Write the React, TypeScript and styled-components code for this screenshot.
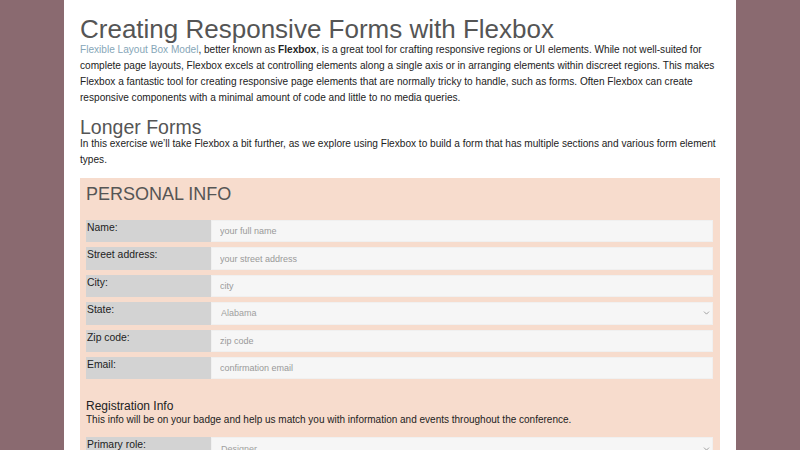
import React from 'react';
import styled, {createGlobalStyle} from 'styled-components';
import {ChevronDown} from 'lucide-react';

const GlobalStyle = createGlobalStyle`
  html, body {
    margin: 0;
    padding: 0;
    background: #8a6a70;
    font-family: "Liberation Sans", Arial, sans-serif;
    color: #222;
  }
`

const Page = styled.div`
  width: 640px;
  min-height: 100vh;
  margin: 0 auto;
  padding: 18px 16px 24px;
  background: #fff;
`

const Title = styled.h1`
  margin: 0 0 2px;
  font-size: 26px;
  font-weight: normal;
  line-height: 22px;
  color: #555;
`

const SubTitle = styled.h2`
  margin: 12px 0 0;
  font-size: 19.5px;
  font-weight: normal;
  line-height: 18px;
  color: #555;
`

const Paragraph = styled.p`
  margin: 0;
  font-size: 10.1px;
  line-height: 16px;
`

const Link = styled.a`
  color: #86a6b8;
  text-decoration: none;
`

const Form = styled.form`
  margin-top: 10px;
  padding: 6px 7px 12px 6px;
  background: #f7dccd;
`

const FormTitle = styled.h3`
  margin: 0 0 16px;
  font-size: 18px;
  font-weight: normal;
  line-height: 20px;
  color: #555;
`

const Rows = styled.div`
  display: flex;
  flex-direction: column;
  gap: 5px;
`

const Row = styled.div`
  display: flex;
  height: 22.4px;
`

const Label = styled.label`
  width: 125px;
  flex-shrink: 0;
  padding: 1px 1px 0;
  box-sizing: border-box;
  background: #d3d3d3;
  font-size: 10.4px;
  line-height: 13px;
  color: #222;
`

const Input = styled.input`
  flex: 1;
  min-width: 0;
  box-sizing: border-box;
  height: 100%;
  margin: 0;
  padding: 0 8px;
  border: 1px solid #f0f0f0;
  background: #f6f6f6;
  font-family: inherit;
  font-size: 9px;
  color: #333;
  outline: none;

  &::placeholder {
    color: #999;
  }
`

const SelectWrap = styled.div`
  position: relative;
  flex: 1;
  display: flex;
`

const Select = styled.select`
  flex: 1;
  min-width: 0;
  box-sizing: border-box;
  height: 100%;
  margin: 0;
  padding: 0 20px 0 9px;
  border: 1px solid #f0f0f0;
  background: #f6f6f6;
  font-family: inherit;
  font-size: 9px;
  color: #a0a0a0;
  appearance: none;
  outline: none;
`

const Chevron = styled(ChevronDown)`
  position: absolute;
  right: 2px;
  top: 50%;
  transform: translateY(-50%);
  pointer-events: none;
  color: #888;
`

const SectionTitle = styled.h4`
  margin: 20px 0 0;
  font-size: 12px;
  font-weight: normal;
  line-height: 14px;
  color: #222;
`

const SectionNote = styled.p`
  margin: 0 0 10px;
  font-size: 10px;
  line-height: 14px;
`

type FieldProps = { label: string, placeholder: string, type?: string }

const Field = ({label, placeholder, type = 'text'}: FieldProps) => (
  <Row>
    <Label>{label}</Label>
    <Input type={type} placeholder={placeholder}/>
  </Row>
)

type ChoiceProps = { label: string, options: string[] }

const Choice = ({label, options}: ChoiceProps) => (
  <Row>
    <Label>{label}</Label>
    <SelectWrap>
      <Select defaultValue={options[0]}>
        {options.map(o => <option key={o}>{o}</option>)}
      </Select>
      <Chevron size={9} strokeWidth={2}/>
    </SelectWrap>
  </Row>
)

const App = () => {
  return (
    <>
      <GlobalStyle/>
      <Page>
        <Title>Creating Responsive Forms with Flexbox</Title>
        <Paragraph>
          <Link href="#">Flexible Layout Box Model</Link>, better known as <strong>Flexbox</strong>, is a great tool
          for crafting responsive regions or UI elements. While not well-suited for complete page layouts, Flexbox
          excels at controlling elements along a single axis or in arranging elements within discreet regions. This
          makes Flexbox a fantastic tool for creating responsive page elements that are normally tricky to handle,
          such as forms. Often Flexbox can create responsive components with a minimal amount of code and little to
          no media queries.
        </Paragraph>
        <SubTitle>Longer Forms</SubTitle>
        <Paragraph>
          In this exercise we’ll take Flexbox a bit further, as we explore using Flexbox to build a form that has
          multiple sections and various form element types.
        </Paragraph>
        <Form onSubmit={e => e.preventDefault()}>
          <FormTitle>PERSONAL INFO</FormTitle>
          <Rows>
            <Field label="Name:" placeholder="your full name"/>
            <Field label="Street address:" placeholder="your street address"/>
            <Field label="City:" placeholder="city"/>
            <Choice label="State:" options={['Alabama', 'Alaska', 'Arizona', 'Arkansas', 'California']}/>
            <Field label="Zip code:" placeholder="zip code"/>
            <Field label="Email:" placeholder="confirmation email" type="email"/>
          </Rows>
          <SectionTitle>Registration Info</SectionTitle>
          <SectionNote>
            This info will be on your badge and help us match you with information and events throughout the
            conference.
          </SectionNote>
          <Rows>
            <Choice label="Primary role:" options={['Designer', 'Developer', 'Manager', 'Other']}/>
            <Field label="Company:" placeholder="company name"/>
          </Rows>
        </Form>
      </Page>
    </>
  );
};

export default App;
